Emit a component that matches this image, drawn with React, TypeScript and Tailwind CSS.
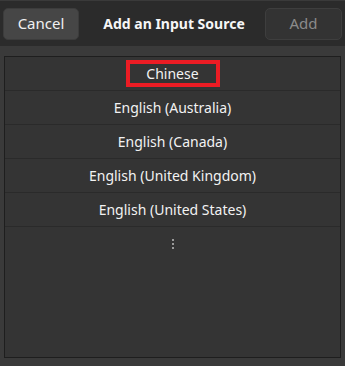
const SOURCES = [
  "Chinese",
  "English (Australia)",
  "English (Canada)",
  "English (United Kingdom)",
  "English (United States)",
];

export default function App() {
  return (
    <div
      className="flex h-[366px] w-[345px] flex-col bg-[#3a3a3a] text-[14px] text-[#f2f2f2]"
      style={{ fontFamily: '"Noto Sans", "Open Sans", sans-serif' }}
    >
      {/* header bar */}
      <div className="flex h-[46px] shrink-0 items-center justify-between border-t border-[#3a3a3a] bg-[#2b2b2b] px-[3px]">
        <button
          type="button"
          className="h-8 w-[76px] rounded-[5px] border border-[#3c3c3c] bg-[#464646] text-[15px] text-[#f0f0f0]"
        >
          Cancel
        </button>
        <span className="pl-1 font-bold text-[#f6f6f6]">Add an Input Source</span>
        <button
          type="button"
          disabled
          className="h-8 w-[77px] rounded-[5px] border border-[#3e3e3e] bg-[#333333] text-[15px] text-[#8b8b8b]"
        >
          Add
        </button>
      </div>

      <div className="flex flex-1 flex-col px-1 pb-2 pt-[10px]">
        <ul className="flex flex-1 flex-col border border-[#1e1e1e] bg-[#343434]">
          {SOURCES.map((s, i) => (
            <li
              key={s}
              className="flex h-[34px] items-center justify-center border-b border-[#2a2a2a]"
            >
              {i === 0 ? (
                <span className="flex h-[27px] w-[94px] items-center justify-center border-[4px] border-[#ec1c24]">
                  {s}
                </span>
              ) : (
                s
              )}
            </li>
          ))}
          <li className="flex h-[34px] items-center justify-center">
            <span className="flex flex-col gap-[2px] pl-px">
              <span className="h-[2px] w-[2px] bg-[#9a9a9a]" />
              <span className="h-[2px] w-[2px] bg-[#9a9a9a]" />
              <span className="h-[2px] w-[2px] bg-[#9a9a9a]" />
            </span>
          </li>
        </ul>
      </div>
    </div>
  );
}
